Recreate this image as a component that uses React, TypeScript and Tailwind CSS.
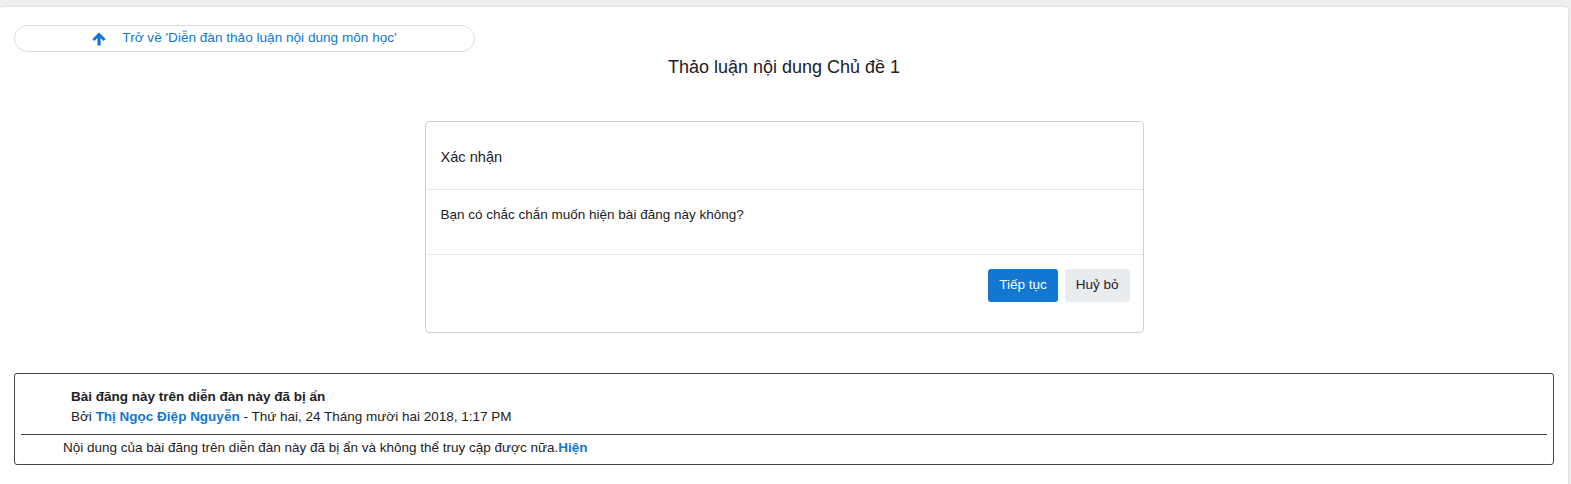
function ArrowUpIcon() {
  return (
    <svg viewBox="0 0 14 14" className="h-[14px] w-[14px]" fill="currentColor">
      <path d="M7 0.5 L13.6 7 L11.6 9 L8.6 6 L8.6 13.5 L5.4 13.5 L5.4 6 L2.4 9 L0.4 7 Z" />
    </svg>
  );
}

export default function App() {
  return (
    <div className="min-h-screen bg-[#eeeeee] pt-[6px] font-['Liberation_Sans',Arial,sans-serif] text-[#1d2125]">
      <div className="ml-[-1px] mr-[2px] min-h-[478px] rounded-t-[4px] border border-[#e2e2e2] bg-white pb-8 pl-[14px] pr-[14px] pt-[18px]">
        <a
          href="#"
          className="flex h-[27px] w-[461px] items-center justify-center gap-[16px] rounded-full border border-[#dcdcdc] text-[13.6px] text-[#1177d1]"
        >
          <ArrowUpIcon />
          <span>Trở về 'Diễn đàn thảo luận nội dung môn học'</span>
        </a>

        <h2 className="mt-[4px] text-center text-[18px] leading-[22px] text-[#1d2125]">
          Thảo luận nội dung Chủ đề 1
        </h2>

        <div className="mx-auto mt-[43px] w-[719px] rounded-[4px] border border-[#cfcfcf]">
          <div className="flex h-[68px] items-center border-b border-[#e6e6e6] px-[15px] pt-[5px] text-[14.6px]">
            Xác nhận
          </div>
          <div className="h-[65px] border-b border-[#e6e6e6] px-[15px] pt-[15px] text-[13.5px]">
            Bạn có chắc chắn muốn hiện bài đăng này không?
          </div>
          <div className="flex h-[77px] justify-end gap-[7px] px-[13px] pt-[14px]">
            <button className="h-[33px] rounded-[3px] bg-[#1177d1] px-[11px] text-[13.5px] text-white">
              Tiếp tục
            </button>
            <button className="h-[33px] rounded-[3px] bg-[#e9ecef] px-[11px] text-[13.5px] text-[#1d2125]">
              Huỷ bỏ
            </button>
          </div>
        </div>

        <div className="mt-[40px] rounded-[3px] border border-[#444] pb-[8px] text-[13.5px] text-[#1d2125]">
          <div className="pl-[56px] pt-[14px]">
            <div className="font-bold leading-[18px]">Bài đăng này trên diễn đàn này đã bị ẩn</div>
            <div className="mt-[1px] leading-[20px]">
              Bởi{" "}
              <a href="#" className="font-bold text-[#1177d1]">
                Thị Ngọc Điệp Nguyễn
              </a>{" "}
              - Thứ hai, 24 Tháng mười hai 2018, 1:17 PM
            </div>
          </div>
          <div className="mx-[6px] mt-[7px] border-t border-[#444]" />
          <div className="pl-[48px] pt-[5px] leading-[16px]">
            Nội dung của bài đăng trên diễn đàn này đã bị ẩn và không thể truy cập được nữa.
            <a href="#" className="font-bold text-[#1177d1]">
              Hiện
            </a>
          </div>
        </div>
      </div>
    </div>
  );
}
